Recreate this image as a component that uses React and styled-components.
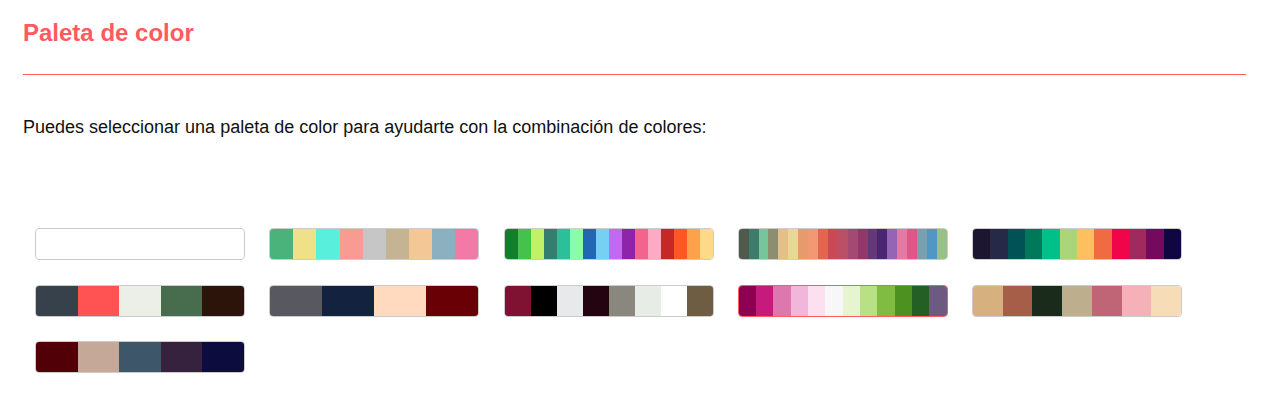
import React from "react";
import styled, { createGlobalStyle } from "styled-components";

const Global = createGlobalStyle`
  html, body { margin: 0; padding: 0; background: #fff; }
  body { font-family: "Liberation Sans", Arial, Helvetica, sans-serif; color: #111; }
`;

const Page = styled.div`
  padding: 19px 35px 0 23px;
`;

const Title = styled.h2`
  margin: 0;
  font-size: 24px;
  line-height: 28px;
  font-weight: 700;
  color: #ff5a5f;
  padding-bottom: 27px;
  border-bottom: 1px solid #ff5a5f;
`;

const Intro = styled.p`
  margin: 42px 0 0;
  font-size: 18px;
  line-height: 21px;
  color: #111;
`;

const Grid = styled.div`
  margin: 90px 0 0 12px;
  display: grid;
  grid-template-columns: repeat(5, 210px);
  column-gap: 24.25px;
  row-gap: 24.5px;
`;

const Palette = styled.div`
  box-sizing: border-box;
  height: 32px;
  display: flex;
  border: 1px solid ${(p) => (p.$selected ? "#ff5a5f" : "#cccccc")};
  border-radius: 4px;
  overflow: hidden;
  background: #fff;
  cursor: pointer;
`;

const Swatch = styled.div`
  flex: 1 1 0;
  background: ${(p) => p.$color};
`;

const palettes = [
  [],
  ["#4ab37b", "#f0e087", "#58efdc", "#f89b93", "#c6c6c6", "#c4b494", "#f4c797", "#8cb0c0", "#f37aa6"],
  ["#137f2d", "#46c14c", "#c1f266", "#337e6e", "#2bbf9a", "#8afda9", "#2167b4", "#75d0f4", "#c368f0", "#8e24aa", "#f2638e", "#ffaac4", "#c62828", "#ff5722", "#ffa04a", "#ffd98a"],
  ["#4f5a4d", "#3f7b6b", "#76c59b", "#8d8d70", "#e4bf87", "#ead796", "#e59b6c", "#f39874", "#e3644f", "#c94a55", "#b95068", "#a24a72", "#93366a", "#633778", "#4b2670", "#9565b5", "#e47aa3", "#df5787", "#7a9faf", "#5296c4", "#99c08a"],
  ["#1d1631", "#262a48", "#005256", "#00785a", "#00c08a", "#aad679", "#fdbf5f", "#f06a42", "#f0054a", "#a0295e", "#730a5e", "#100640"],
  ["#36414b", "#ff5252", "#eceee8", "#476c4e", "#2d140a"],
  ["#585860", "#13233f", "#ffdabe", "#680005"],
  ["#7f1232", "#000000", "#e8e9eb", "#230410", "#8a877f", "#e8ece6", "#ffffff", "#6e5d42"],
  ["#8e0152", "#c51b7d", "#de77ae", "#f1b6da", "#fde0ef", "#f7f7f7", "#e6f5d0", "#b8e186", "#7fbc41", "#4d9221", "#245f26", "#6e5a80"],
  ["#d6b07f", "#a65e49", "#1a2b1c", "#bdae8e", "#bf6575", "#f5b0b8", "#f7dcb8"],
  ["#520008", "#c6a898", "#3d566a", "#36223f", "#0c0c3e"],
];

const SELECTED = 8;

export default function App() {
  return (
    <>
      <Global />
      <Page>
        <Title>Paleta de color</Title>
        <Intro>Puedes seleccionar una paleta de color para ayudarte con la combinación de colores:</Intro>
        <Grid>
          {palettes.map((colors, i) => (
            <Palette key={i} $selected={i === SELECTED}>
              {colors.map((c, j) => (
                <Swatch key={j} $color={c} />
              ))}
            </Palette>
          ))}
        </Grid>
      </Page>
    </>
  );
}
